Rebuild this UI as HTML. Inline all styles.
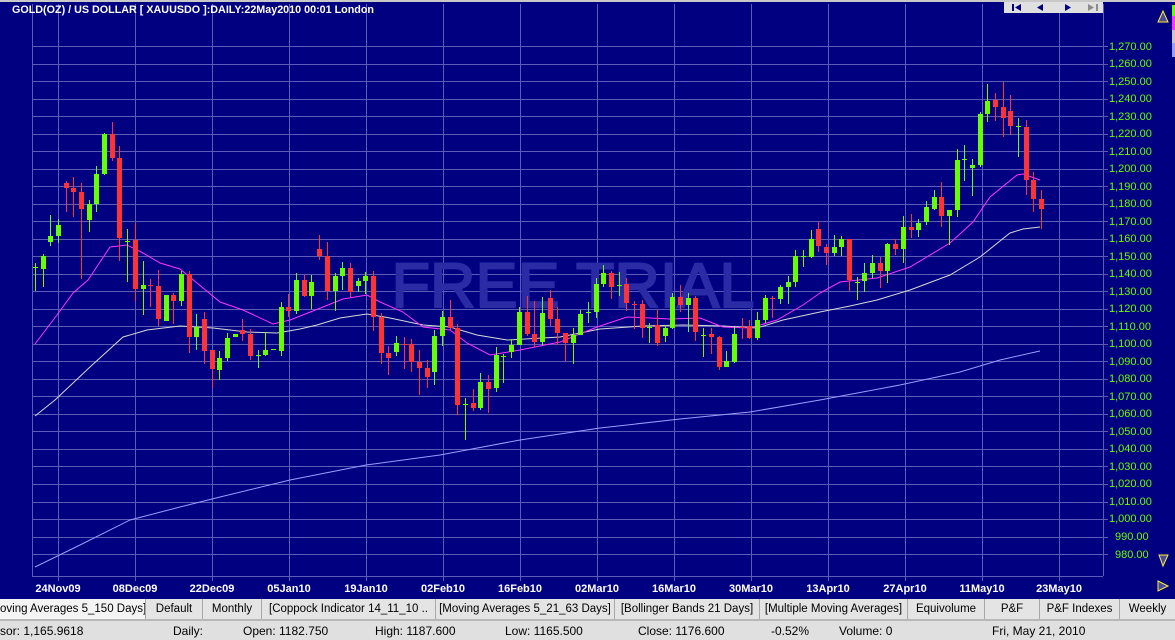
<!DOCTYPE html>
<html><head><meta charset="utf-8">
<style>
*{margin:0;padding:0;box-sizing:border-box}
body{width:1175px;height:640px;overflow:hidden;background:#000080;font-family:"Liberation Sans",Arial,sans-serif;position:relative}
#tabs{position:absolute;left:0;top:599px;width:1175px;height:22px;background:#e4e4e4;border-bottom:2px solid #b8b8b8;font-size:11.5px;color:#000}
.tab{position:absolute;top:0;height:20px;line-height:21px;border-right:1px solid #a8a8a8;text-align:center;white-space:nowrap;overflow:hidden}
#status{position:absolute;left:0;top:621px;width:1175px;height:19px;background:#e0e0e0;font-size:12px;color:#000}
#status span{position:absolute;top:3px;white-space:nowrap}
</style></head><body>
<svg id="c" width="1175" height="599" style="position:absolute;left:0;top:0" xmlns="http://www.w3.org/2000/svg">
<rect x="0" y="0" width="1175" height="2" fill="#c8c8c8"/>
<g id="grid" stroke="#5c5cb8" stroke-width="1"></g>
<text x="573" y="307" font-family="Liberation Sans, Arial, sans-serif" font-size="63" fill="#2b2ba6" stroke="#2b2ba6" stroke-width="2" text-anchor="middle">FREE TRIAL</text>
<polyline fill="none" stroke="#9c9cff" stroke-width="1" points="35,567 80,545 130,520 180,507 220,497 290,480 366,465 440,455 520,440 600,428 680,419 750,412 820,400 900,385 960,372 1000,360 1040,351"/>
<polyline fill="none" stroke="#d8d8d8" stroke-width="1" points="35,416 55,400 90,367 123,337 147,330 180,326 213,328 247,332 277,333 300,329 317,325 340,318 367,314 390,318 423,325 450,327 477,335 507,340 560,337 600,329 643,326 683,325 723,326 757,328 783,320 820,312 850,306 877,300 910,290 950,275 980,257 1010,233 1023,229 1040,227"/>
<polyline fill="none" stroke="#ff33ff" stroke-width="1" points="35,344 57,315 73,293 88,280 110,247 127,245 143,253 160,263 180,269 197,283 220,302 243,310 273,324 290,320 323,307 343,299 367,295 380,302 403,312 423,327 450,330 467,343 490,355 520,350 560,342 597,327 627,317 650,318 670,319 700,318 723,327 750,328 777,320 803,305 820,293 840,282 877,278 910,267 950,243 973,222 990,197 1017,175 1023,174 1040,180"/>
<g id="candles"></g>
<text x="12" y="13" font-size="11" font-weight="bold" fill="#fff" font-family="Liberation Sans, Arial, sans-serif" textLength="362" lengthAdjust="spacingAndGlyphs">GOLD(OZ) / US DOLLAR [ XAUUSDO ]:DAILY:22May2010 00:01 London</text>
<rect x="1004" y="2" width="99" height="11" fill="#e0e0e0"/>
<g fill="#000080">
<rect x="1012" y="4" width="2" height="7"/><polygon points="1015,7.5 1021,4 1021,11"/>
<polygon points="1037,7.5 1043,4 1043,11"/>
<polygon points="1071,7.5 1065,4 1065,11"/>
</g>
<g fill="#8a8a8a"><polygon points="1094,7.5 1088,4 1088,11"/><rect x="1096" y="4" width="2" height="7"/></g>
<polygon points="1163,11 1158,22 1168,22" fill="#4a4a9a" stroke="#ffee33" stroke-width="1"/>
<polygon points="1159,555 1168,555 1163,566" fill="#4a4a9a" stroke="#ffee33" stroke-width="1"/>
<polygon points="1158,581 1168,586 1158,591" fill="#4a4a9a" stroke="#ffee33" stroke-width="1"/>
<rect x="1172" y="5" width="3" height="11" fill="#66ff00"/>
<rect x="1172" y="16" width="3" height="14" fill="#ff33ff"/>
<rect x="1172" y="30" width="3" height="13" fill="#c8c8c8"/>
<rect x="1172" y="43" width="3" height="14" fill="#9c9cff"/>
<g id="ylab" font-family="Liberation Sans, Arial, sans-serif" font-size="11" fill="#66ff00">
<text x="1109" y="50">1,270.00</text><text x="1109" y="67">1,260.00</text><text x="1109" y="85">1,250.00</text><text x="1109" y="102">1,240.00</text><text x="1109" y="120">1,230.00</text><text x="1109" y="137">1,220.00</text><text x="1109" y="155">1,210.00</text><text x="1109" y="172">1,200.00</text><text x="1109" y="190">1,190.00</text><text x="1109" y="207">1,180.00</text><text x="1109" y="225">1,170.00</text><text x="1109" y="242">1,160.00</text><text x="1109" y="260">1,150.00</text><text x="1109" y="277">1,140.00</text><text x="1109" y="295">1,130.00</text><text x="1109" y="312">1,120.00</text><text x="1109" y="330">1,110.00</text><text x="1109" y="347">1,100.00</text><text x="1109" y="365">1,090.00</text><text x="1109" y="382">1,080.00</text><text x="1109" y="400">1,070.00</text><text x="1109" y="417">1,060.00</text><text x="1109" y="435">1,050.00</text><text x="1109" y="452">1,040.00</text><text x="1109" y="470">1,030.00</text><text x="1109" y="487">1,020.00</text><text x="1109" y="505">1,010.00</text><text x="1109" y="522">1,000.00</text><text x="1115" y="540">990.00</text><text x="1115" y="558">980.00</text>
</g>
<g font-family="Liberation Sans, Arial, sans-serif" font-size="11" font-weight="bold" fill="#fff" text-anchor="middle">
<text x="58" y="592">24Nov09</text><text x="135" y="592">08Dec09</text><text x="212" y="592">22Dec09</text><text x="289" y="592">05Jan10</text><text x="366" y="592">19Jan10</text><text x="443" y="592">02Feb10</text><text x="520" y="592">16Feb10</text><text x="597" y="592">02Mar10</text><text x="674" y="592">16Mar10</text><text x="751" y="592">30Mar10</text><text x="828" y="592">13Apr10</text><text x="905" y="592">27Apr10</text><text x="982" y="592">11May10</text><text x="1059" y="592">23May10</text>
</g>
</svg>
<div id="tabs">
<div class="tab" style="left:0;width:146px;background:#f4f4f4;text-align:left">oving Averages 5_150 Days]</div>
<div class="tab" style="left:146px;width:57px">Default</div>
<div class="tab" style="left:203px;width:59px">Monthly</div>
<div class="tab" style="left:262px;width:174px">[Coppock Indicator 14_11_10 ..</div>
<div class="tab" style="left:436px;width:179px">[Moving Averages 5_21_63 Days]</div>
<div class="tab" style="left:615px;width:145px">[Bollinger Bands 21 Days]</div>
<div class="tab" style="left:760px;width:148px">[Multiple Moving Averages]</div>
<div class="tab" style="left:908px;width:77px">Equivolume</div>
<div class="tab" style="left:985px;width:55px">P&amp;F</div>
<div class="tab" style="left:1040px;width:80px">P&amp;F Indexes</div>
<div class="tab" style="left:1120px;width:55px;border-right:none">Weekly</div>
</div>
<div id="status">
<span style="left:0">sor: 1,165.9618</span>
<span style="left:173px">Daily:</span>
<span style="left:243px">Open: 1182.750</span>
<span style="left:375px">High: 1187.600</span>
<span style="left:505px">Low: 1165.500</span>
<span style="left:638px">Close: 1176.600</span>
<span style="left:771px">-0.52%</span>
<span style="left:839px">Volume: 0</span>
<span style="left:992px">Fri, May 21, 2010</span>
</div>
<script>
var NS="http://www.w3.org/2000/svg";
function el(p,t,a){var e=document.createElementNS(NS,t);for(var k in a)e.setAttribute(k,a[k]);p.appendChild(e);return e;}
var g=document.getElementById("grid");
for(var i=0;i<30;i++){var y=Math.round(46+i*17.52)+.5;el(g,"line",{x1:32,x2:1108,y1:y,y2:y});}
var xs=[32,58,135,212,289,366,443,520,597,674,751,828,905,982,1059,1103];
xs.forEach(function(x){el(g,"line",{x1:x+.5,x2:x+.5,y1:4,y2:(x==32||x==1103)?576:581});});
el(g,"line",{x1:32,x2:1103,y1:576.5,y2:576.5});
var D=[
[267,268,263,291,'g'],[256,269,254,287,'g'],[236,242,215,246,'g'],[225,236,219,243,'g'],[183,188,181,212,'r'],[188,192,177,217,'r'],[192,209,183,279,'r'],[204,220,200,232,'g'],[174,204,166,212,'g'],[134,174,133,175,'g'],
[134,158,122,161,'r'],[158,238,146,261,'r'],[241,242,229,282,'g'],[240,289,223,301,'r'],[285,289,261,315,'g'],[285,286,279,307,'r'],[286,319,270,326,'r'],[295,321,295,321,'g'],[295,301,293,324,'r'],[274,301,271,306,'g'],
[274,337,271,353,'r'],[327,337,314,350,'g'],[319,351,312,364,'r'],[350,369,350,388,'r'],[358,370,351,380,'g'],[338,358,333,361,'g'],[334,337,334,337,'g'],[330,334,319,341,'r'],[334,356,329,360,'r'],[355,356,350,368,'g'],
[350,355,332,356,'g'],[349,350,349,350,'g'],[307,351,302,356,'g'],[307,311,294,317,'r'],[280,311,273,314,'g'],[280,296,275,297,'r'],[282,296,275,309,'g'],[249,256,235,260,'r'],[256,291,242,300,'r'],[276,291,273,311,'g'],
[268,276,262,290,'g'],[268,292,263,297,'r'],[281,286,278,292,'g'],[276,281,272,294,'g'],[276,317,271,331,'r'],[317,353,313,364,'r'],[353,358,346,375,'r'],[343,352,336,356,'g'],[344,345,337,369,'r'],[344,362,339,372,'r'],
[362,368,350,395,'r'],[368,377,360,388,'r'],[336,372,330,385,'g'],[317,336,311,346,'g'],[317,328,300,331,'r'],[328,405,324,415,'r'],[404,405,398,440,'g'],[403,408,389,411,'r'],[382,408,373,410,'g'],[382,389,375,413,'r'],
[355,388,347,392,'g'],[356,357,354,383,'g'],[345,352,339,358,'g'],[312,345,307,345,'g'],[312,334,296,336,'r'],[334,342,301,347,'r'],[313,342,297,345,'g'],[298,319,290,326,'r'],[319,333,307,345,'r'],[333,343,333,361,'r'],
[335,343,328,364,'g'],[314,335,310,335,'g'],[312,313,302,323,'g'],[284,312,278,318,'g'],[273,284,265,287,'g'],[273,287,271,299,'r'],[285,286,272,296,'g'],[284,303,278,311,'r'],[304,305,301,329,'r'],[304,328,300,338,'r'],
[327,328,323,343,'g'],[325,343,310,346,'r'],[328,336,325,342,'g'],[297,328,293,329,'g'],[297,305,285,312,'r'],[298,305,293,332,'g'],[298,332,296,341,'r'],[335,336,328,357,'g'],[334,337,328,354,'r'],[337,367,336,370,'r'],
[361,367,351,367,'g'],[334,362,327,363,'g'],[327,328,318,339,'r'],[326,338,320,339,'r'],[320,338,312,340,'g'],[298,320,295,323,'g'],[298,299,296,318,'r'],[287,299,285,304,'g'],[282,287,276,304,'g'],[256,282,250,287,'g'],
[256,257,250,267,'g'],[239,257,230,258,'g'],[229,246,222,252,'r'],[247,253,244,265,'r'],[247,253,235,256,'g'],[239,247,236,256,'g'],[239,280,239,291,'r'],[282,283,277,300,'g'],[273,281,263,292,'g'],[263,273,255,278,'g'],
[263,271,257,288,'r'],[244,271,243,283,'g'],[244,249,239,255,'r'],[227,249,216,263,'g'],[227,230,214,238,'r'],[223,230,219,237,'g'],[207,222,201,225,'g'],[197,209,190,210,'g'],[197,216,182,227,'r'],[210,216,210,245,'g'],
[160,210,149,217,'g'],[159,160,145,181,'g'],[165,168,159,196,'g'],[114,165,112,167,'g'],[101,114,84,122,'g'],[100,107,93,121,'r'],[107,118,82,137,'r'],[111,126,95,135,'r'],[126,127,118,157,'g'],[127,180,120,195,'r'],
[180,199,172,212,'r'],[199,209,190,229,'r']];
var cg=document.getElementById("candles");
D.forEach(function(d,i){var x=Math.round(35+i*7.68);var c=d[4]=='g'?'#66ff00':'#ff3333';
el(cg,"rect",{x:x,y:d[2],width:1,height:Math.max(1,d[3]-d[2]),fill:c});
var h=d[1]-d[0];
if(h<=1){el(cg,"rect",{x:x-2,y:d[0],width:5,height:1,fill:c});}
else el(cg,"rect",{x:x-2,y:d[0],width:5,height:h,fill:c});});
</script>
</body></html>
